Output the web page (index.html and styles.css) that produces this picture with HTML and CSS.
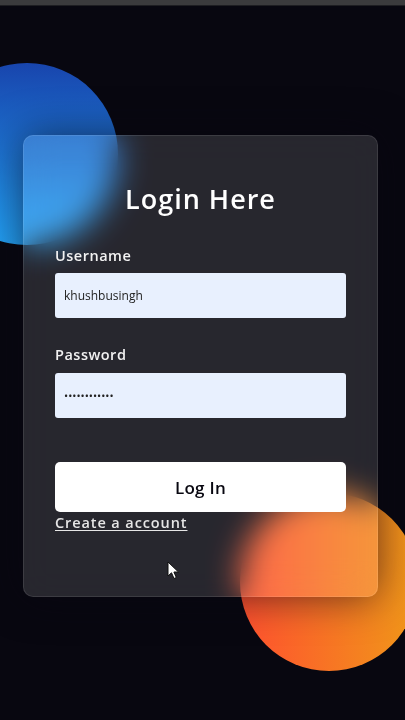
FILE: index.html
```html
<!DOCTYPE html>
<html lang="en">
<head>
<meta charset="utf-8">
<title>Login Here</title>
<link rel="stylesheet" href="styles.css">
</head>
<body>
<div class="topbar"></div>
<main class="stage">
  <div class="shape shape-blue"></div>
  <div class="shape shape-orange"></div>
  <form class="card" onsubmit="return false">
    <h3 class="title">Login Here</h3>
    <label class="label" for="username">Username</label>
    <input class="field" id="username" type="text" value="khushbusingh">
    <label class="label label-pass" for="password">Password</label>
    <input class="field field-pass" id="password" type="password" value="khushbu12345">
    <button class="btn" type="submit">Log In</button>
    <a class="link" href="#">Create a account</a>
  </form>
  <svg class="cursor" width="13" height="19" viewBox="0 0 13 19">
    <path d="M1 1 L1 15 L4.5 11.8 L7 17.5 L9.3 16.5 L6.9 11 L11.5 11 Z" fill="#fff" stroke="#111" stroke-width="1"/>
  </svg>
</main>
</body>
</html>
```

FILE: styles.css
```css
* { box-sizing: border-box; }
html, body {
  margin: 0;
  padding: 0;
  width: 405px;
  height: 720px;
  overflow: hidden;
  background: #080710;
  font-family: "Open Sans", "DejaVu Sans", sans-serif;
}
.topbar {
  height: 6px;
  background: #3b3b3d;
  border-bottom: 1px solid #1e1e22;
}
.stage {
  position: relative;
  height: 714px;
  padding-top: 129px;
}
.shape {
  position: absolute;
  border-radius: 50%;
}
.shape-blue {
  width: 182px;
  height: 182px;
  left: -64px;
  top: 57px;
  background: linear-gradient(#1845ad, #23a2f6);
}
.shape-orange {
  width: 178px;
  height: 178px;
  left: 240px;
  top: 487px;
  background: linear-gradient(to right, #ff512f, #f09819);
}
.card {
  position: relative;
  margin: 0 0 0 23px;
  width: 355px;
  height: 462px;
  background: rgba(255, 255, 255, 0.13);
  border: 1px solid rgba(255, 255, 255, 0.1);
  border-radius: 10px;
  backdrop-filter: blur(16px);
  -webkit-backdrop-filter: blur(16px);
  box-shadow: 0 0 40px rgba(8, 7, 16, 0.6);
  padding: 45px 31px 0 31px;
  display: flex;
  flex-direction: column;
  align-items: stretch;
}
.title {
  margin: 0;
  font-size: 27px;
  font-weight: 600;
  line-height: 36px;
  letter-spacing: 1px;
  color: #fff;
  text-align: center;
}
.label {
  display: block;
  margin-top: 29px;
  font-size: 14.5px;
  font-weight: 600;
  line-height: 20px;
  letter-spacing: 0.5px;
  color: #f2f2f2;
}
.label-pass { margin-top: 27px; }
.field {
  display: block;
  margin-top: 7px;
  height: 45px;
  width: 100%;
  border: none;
  border-radius: 3px;
  background: #e8f0fe;
  padding: 0 9px;
  font-family: "Open Sans", "DejaVu Sans", sans-serif;
  font-size: 12px;
  color: #222;
  outline: none;
}
.field-pass {
  margin-top: 8px;
  font-size: 11px;
  letter-spacing: 0;
}
.btn {
  display: block;
  margin-top: 44px;
  height: 50px;
  width: 100%;
  border: none;
  border-radius: 5px;
  background: #fff;
  color: #080710;
  font-family: "Open Sans", "DejaVu Sans", sans-serif;
  font-size: 17px;
  font-weight: 600;
  letter-spacing: 0.3px;
}
.link {
  align-self: flex-start;
  margin-top: 1px;
  font-size: 14.5px;
  font-weight: 600;
  line-height: 20px;
  letter-spacing: 0.9px;
  color: #e6e6e6;
  text-decoration: underline;
  text-underline-offset: 2px;
}
.cursor {
  position: absolute;
  left: 167px;
  top: 555px;
}
```
